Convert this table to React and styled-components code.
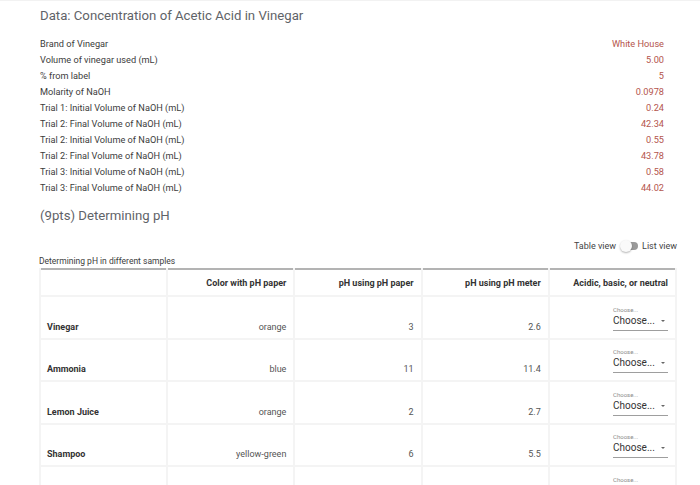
import React from 'react';
import styled, { createGlobalStyle } from 'styled-components';

const GlobalStyle = createGlobalStyle`
    body {
        margin: 0;
        background: #ffffff;
        font-family: Roboto, "Liberation Sans", Arial, sans-serif;
        color: #333333;
    }
`;

const Page = styled.main`
    padding: 5px 23px 0 39px;
    border-top: 1px solid #f2f2f2;
`;

const Title = styled.h2`
    margin: 0 0 10px 1px;
    font-size: 13.2px;
    line-height: 20px;
    font-weight: 400;
    color: #5f6368;
`;

const DataList = styled.div`
    display: flex;
    flex-direction: column;
    margin: 0 13px 0 1px;
`;

const DataRow = styled.div`
    display: flex;
    justify-content: space-between;
    height: 16px;
    line-height: 16px;
    font-size: 9.2px;
`;

const Label = styled.span`
    color: #3c3c3c;
`;

const Value = styled.span`
    color: #b4544c;
`;

const SectionTitle = styled.h3`
    margin: 11px 0 0 1px;
    font-size: 13.2px;
    line-height: 18px;
    font-weight: 400;
    color: #5f6368;
`;

const ToggleBar = styled.div`
    display: flex;
    justify-content: flex-end;
    align-items: center;
    gap: 3px;
    margin-top: 13px;
    height: 16px;
    font-size: 9px;
    color: #444444;
`;

const Switch = styled.span`
    position: relative;
    width: 18px;
    height: 12px;
    margin: 0 1px;
`;

const Track = styled.span`
    position: absolute;
    right: 0;
    top: 2px;
    width: 15px;
    height: 8px;
    border-radius: 4px;
    background: #9a9a9a;
`;

const Thumb = styled.span`
    position: absolute;
    left: 0;
    top: 0;
    width: 12px;
    height: 12px;
    border-radius: 50%;
    background: #fafafa;
    box-shadow: 0 1px 2px rgba(0, 0, 0, 0.3);
`;

const Caption = styled.div`
    margin-top: 1px;
    font-size: 8.5px;
    line-height: 13px;
    color: #3c3c3c;
`;

const Table = styled.table`
    width: 638px;
    table-layout: fixed;
    border-collapse: collapse;
    border-top: 2px solid #b3b3b3;
    font-size: 9px;
`;

const HeadCell = styled.th`
    height: 25px;
    padding: 0 7px 0 6px;
    text-align: ${(p) => (p.$left ? 'left' : 'right')};
    font-weight: 700;
    color: #333333;
    border: 2px solid #f4f4f4;
    border-top: none;
`;

const Cell = styled.td`
    height: 34.5px;
    padding: 0 7px 6px 6px;
    vertical-align: bottom;
    text-align: ${(p) => (p.$left ? 'left' : 'right')};
    font-weight: ${(p) => (p.$bold ? 700 : 400)};
    color: ${(p) => (p.$bold ? '#333333' : '#555555')};
    border: 2px solid #f4f4f4;
`;

const Select = styled.div`
    display: inline-flex;
    flex-direction: column;
    align-items: flex-start;
    width: 55px;
    margin-bottom: 1px;
    border-bottom: 1px solid #9e9e9e;
    text-align: left;
`;

const SelectLabel = styled.span`
    font-size: 6px;
    line-height: 8px;
    color: #8a8a8a;
`;

const SelectValue = styled.span`
    display: flex;
    justify-content: space-between;
    align-items: center;
    width: 100%;
    font-size: 10px;
    line-height: 14px;
    padding-bottom: 2px;
    color: #333333;
`;

const Caret = styled.span`
    width: 0;
    height: 0;
    margin-right: 3px;
    border-left: 2.5px solid transparent;
    border-right: 2.5px solid transparent;
    border-top: 2.5px solid #666666;
`;

const data = [
    ['Brand of Vinegar', 'White House'],
    ['Volume of vinegar used (mL)', '5.00'],
    ['% from label', '5'],
    ['Molarity of NaOH', '0.0978'],
    ['Trial 1: Initial Volume of NaOH (mL)', '0.24'],
    ['Trial 2: Final Volume of NaOH (mL)', '42.34'],
    ['Trial 2: Initial Volume of NaOH (mL)', '0.55'],
    ['Trial 2: Final Volume of NaOH (mL)', '43.78'],
    ['Trial 3: Initial Volume of NaOH (mL)', '0.58'],
    ['Trial 3: Final Volume of NaOH (mL)', '44.02'],
];

const samples = [
    ['Vinegar', 'orange', '3', '2.6'],
    ['Ammonia', 'blue', '11', '11.4'],
    ['Lemon Juice', 'orange', '2', '2.7'],
    ['Shampoo', 'yellow-green', '6', '5.5'],
    ['', '', '', ''],
];

const ChooseSelect = () => (
    <Select>
        <SelectLabel>Choose...</SelectLabel>
        <SelectValue>
            Choose...
            <Caret />
        </SelectValue>
    </Select>
);

const App = () => {
    return (
        <Page>
            <GlobalStyle />
            <Title>Data: Concentration of Acetic Acid in Vinegar</Title>
            <DataList>
                {data.map(([label, value], i) => (
                    <DataRow key={i}>
                        <Label>{label}</Label>
                        <Value>{value}</Value>
                    </DataRow>
                ))}
            </DataList>

            <SectionTitle>(9pts) Determining pH</SectionTitle>

            <ToggleBar>
                <span>Table view</span>
                <Switch>
                    <Track />
                    <Thumb />
                </Switch>
                <span>List view</span>
            </ToggleBar>

            <Caption>Determining pH in different samples</Caption>
            <Table>
                <thead>
                    <tr>
                        <HeadCell $left></HeadCell>
                        <HeadCell>Color with pH paper</HeadCell>
                        <HeadCell>pH using pH paper</HeadCell>
                        <HeadCell>pH using pH meter</HeadCell>
                        <HeadCell>Acidic, basic, or neutral</HeadCell>
                    </tr>
                </thead>
                <tbody>
                    {samples.map(([name, color, paper, meter], i) => (
                        <tr key={i}>
                            <Cell $left $bold>{name}</Cell>
                            <Cell>{color}</Cell>
                            <Cell>{paper}</Cell>
                            <Cell>{meter}</Cell>
                            <Cell><ChooseSelect /></Cell>
                        </tr>
                    ))}
                </tbody>
            </Table>
        </Page>
    );
};

export default App;
